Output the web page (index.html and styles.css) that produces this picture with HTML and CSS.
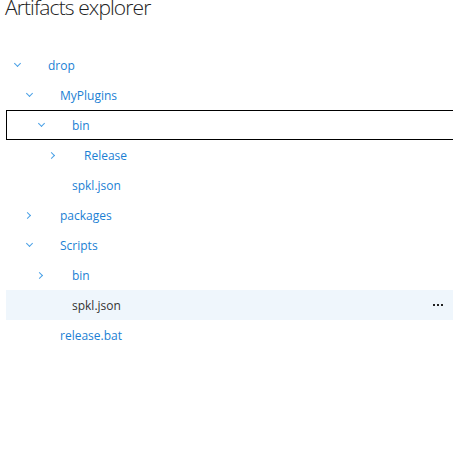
FILE: index.html
```html
<!DOCTYPE html>
<html>
<head>
<meta charset="utf-8">
<link rel="stylesheet" href="styles.css">
</head>
<body>
<h1 class="title">Artifacts explorer</h1>
<ul class="tree">
  <li class="row lvl0"><span class="chev down"></span><span class="name">drop</span></li>
  <li class="row lvl1"><span class="chev down"></span><span class="name">MyPlugins</span></li>
  <li class="row lvl2 selected"><span class="chev down"></span><span class="name">bin</span></li>
  <li class="row lvl3"><span class="chev right"></span><span class="name">Release</span></li>
  <li class="row lvl2"><span class="chev none"></span><span class="name">spkl.json</span></li>
  <li class="row lvl1"><span class="chev right"></span><span class="name">packages</span></li>
  <li class="row lvl1"><span class="chev down"></span><span class="name">Scripts</span></li>
  <li class="row lvl2"><span class="chev right"></span><span class="name">bin</span></li>
  <li class="row lvl2 hover"><span class="chev none"></span><span class="name">spkl.json</span><span class="more"><i></i><i></i><i></i></span></li>
  <li class="row lvl1"><span class="chev none"></span><span class="name">release.bat</span></li>
</ul>
</body>
</html>
```
FILE: styles.css
```css
html, body {
  margin: 0;
  padding: 0;
  background: #fff;
  overflow: hidden;
}
body {
  font-family: "Segoe UI", "Open Sans", "Noto Sans", sans-serif;
  width: 453px;
  height: 471px;
}
.title {
  margin: -8px 0 0 5px;
  font-family: "Open Sans", sans-serif;
  font-weight: 300;
  font-size: 21px;
  line-height: 30px;
  color: #222;
  letter-spacing: -0.9px;
}
.tree {
  list-style: none;
  margin: 28px 0 0 6px;
  padding: 0;
  width: 460px;
}
.row {
  position: relative;
  display: flex;
  align-items: center;
  height: 30px;
  box-sizing: border-box;
  font-size: 12px;
  color: #1b7fd4;
}
.lvl0 { padding-left: 6px; }
.lvl1 { padding-left: 18px; }
.lvl2 { padding-left: 30px; }
.lvl3 { padding-left: 42px; }
.chev {
  width: 36px;
  height: 30px;
  flex: none;
  display: flex;
  align-items: center;
}
.chev.down::before {
  content: "";
  display: block;
  width: 4px;
  height: 4px;
  border-right: 1.2px solid #4aa0e6;
  border-bottom: 1.2px solid #4aa0e6;
  transform: rotate(45deg);
  margin: -3px 0 0 3px;
}
.chev.right::before {
  content: "";
  display: block;
  width: 4px;
  height: 4px;
  border-right: 1.2px solid #4aa0e6;
  border-bottom: 1.2px solid #4aa0e6;
  transform: rotate(-45deg);
  margin: 0 0 0 1px;
}
.selected {
  border: 1px solid #000;
}
.selected .chev { margin-left: -1px; }
.hover {
  background: #eff6fc;
  color: #333;
}
.more {
  position: absolute;
  left: 427px;
  top: 14px;
  display: flex;
  gap: 2px;
}
.more i {
  display: block;
  width: 2px;
  height: 2px;
  background: #222;
}
```
